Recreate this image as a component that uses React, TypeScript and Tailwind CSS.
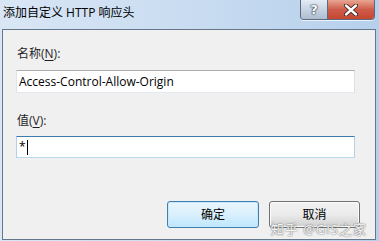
import React from "react";

const cjk = "font-['Segoe_UI','Open_Sans','Noto_Sans_CJK_SC',sans-serif]";

const TitleButtons = () => (
  <div className="flex h-[20px] self-start overflow-hidden rounded-b-[4px] border border-t-0 border-[#5b6b7d] shadow-[0_1px_0_rgba(255,255,255,0.7)]">
    <div className="flex w-[27px] items-center justify-center border-r border-[#5b6b7d] bg-gradient-to-b from-[#e4ecf5] via-[#c7d4e3] to-[#aebdd0]">
      <span className="text-[13px] font-bold leading-none text-white [text-shadow:0_0_1px_#2d3a4a,0_0_1px_#2d3a4a,0_0_2px_#2d3a4a] font-['DejaVu_Sans',sans-serif]">
        ?
      </span>
    </div>
    <div className="flex w-[46px] items-center justify-center bg-gradient-to-b from-[#e8a593] via-[#cf5c4a] to-[#c4462f]">
      <svg width="14" height="12" viewBox="0 0 14 12">
        <path
          d="M2 1.5 L12 10.5 M12 1.5 L2 10.5"
          stroke="#3b2020"
          strokeWidth="4.2"
          strokeLinecap="round"
        />
        <path
          d="M2 1.5 L12 10.5 M12 1.5 L2 10.5"
          stroke="#ffffff"
          strokeWidth="2.4"
          strokeLinecap="round"
        />
      </svg>
    </div>
  </div>
);

const Label = ({ text, hot }: { text: string; hot: string }) => (
  <div className={`pl-[14px] text-[12px] leading-[16px] text-[#1e1e1e] ${cjk}`}>
    {text}(<span className="underline underline-offset-2">{hot}</span>):
  </div>
);

const App = () => {
  return (
    <div className="flex h-[241px] w-[379px] flex-col bg-gradient-to-r from-[#d9e6f5] via-[#c9dcf1] to-[#b6d0ec]">
      <div className="flex h-[29px] shrink-0 items-start justify-between pl-[3px] pr-[4px]">
        <div className={`pt-[5px] text-[12px] leading-[16px] text-black ${cjk}`}>
          添加自定义 HTTP 响应头
        </div>
        <TitleButtons />
      </div>

      <div className="mb-[1px] ml-[2px] mr-[3px] flex flex-1 flex-col border border-[#65788b] bg-[#f0f0f0] pt-[16px]">
        <Label text="名称" hot="N" />
        <div className="ml-[13px] mr-[20px] mt-[8px] flex h-[23px] items-center border border-[#abadb3] border-b-[#e3e9ef] border-l-[#e2e3ea] border-r-[#dbdfe6] bg-white px-[2px]">
          <span className={`text-[12px] text-black ${cjk}`}>Access-Control-Allow-Origin</span>
        </div>

        <div className="mt-[20px]">
          <Label text="值" hot="V" />
        </div>
        <div className="ml-[13px] mr-[20px] mt-[7px] flex h-[22px] items-center border border-[#3d7bad] border-b-[#b7d9ed] border-l-[#b5cfe7] border-r-[#b5cfe7] bg-white px-[2px]">
          <span className={`text-[12px] text-black ${cjk}`}>*</span>
          <span className="ml-[1px] h-[15px] w-[1px] bg-black" />
        </div>

        <div className="relative mt-[43px] flex justify-end gap-[10px] pr-[15px]">
          <button className="flex h-[27px] w-[92px] items-center justify-center rounded-[3px] border border-[#3c7fb1] bg-gradient-to-b from-[#eaf6fd] via-[#d9f0fc] to-[#bee6fd] shadow-[inset_0_0_0_1px_#c8e8fb]">
            <span className={`text-[12px] leading-none text-black ${cjk}`}>确定</span>
          </button>
          <button className="flex h-[27px] w-[91px] items-center justify-center rounded-[3px] border border-[#707070] bg-gradient-to-b from-[#f2f2f2] via-[#ebebeb] to-[#cfcfcf] shadow-[inset_0_0_0_1px_#fcfcfc]">
            <span className={`text-[12px] leading-none text-black ${cjk}`}>取消</span>
          </button>
          <div
            className={`pointer-events-none absolute bottom-[-8px] right-[8px] text-[13px] leading-[13px] tracking-[1px] text-white/95 [text-shadow:0_0_1px_#666,0_0_2px_#888] ${cjk}`}
          >
            知乎 @GIS之家
          </div>
        </div>
      </div>
    </div>
  );
};

export default App;
